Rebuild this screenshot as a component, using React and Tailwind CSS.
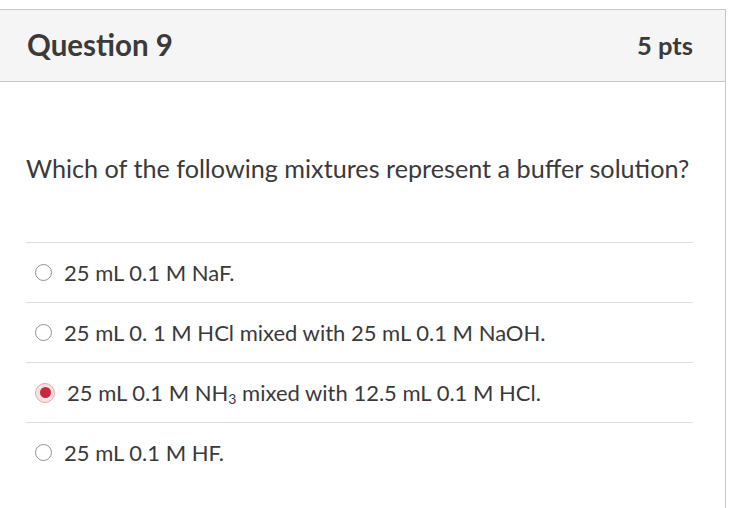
const answers = [
  { id: "a", label: <>25 mL 0.1 M NaF.</> },
  { id: "b", label: <>25 mL 0. 1 M HCl mixed with 25 mL 0.1 M NaOH.</> },
  {
    id: "c",
    label: (
      <>
        25 mL 0.1 M NH<sub className="relative top-[3px] text-[14px]">3</sub> mixed with 12.5 mL 0.1 M HCl.
      </>
    ),
    checked: true,
  },
  { id: "d", label: <>25 mL 0.1 M HF.</> },
];

function Radio({ checked }) {
  if (checked) {
    return (
      <span className="flex h-[20px] w-[20px] shrink-0 items-center justify-center rounded-full border border-[#e9a3aa] bg-[#fbe3e5]">
        <span className="h-[11px] w-[11px] rounded-full bg-[#c8283c]" />
      </span>
    );
  }
  return <span className="block h-[17px] w-[17px] shrink-0 rounded-full border-[1.5px] border-[#8e9397] bg-white" />;
}

export default function App() {
  return (
    <div className="h-[508px] w-[741px] overflow-hidden bg-white pt-[9px] font-['Lato',sans-serif] text-[#3a3a3a]">
      <div className="h-[520px] w-[726px] border-r border-t border-[#c4c8cb]">
        <div className="flex h-[72px] items-center justify-between border-b border-[#c4c8cb] bg-[#f5f5f5] pl-[27px] pr-[32px]">
          <h2 className="text-[29.5px] font-bold">Question 9</h2>
          <span className="text-[25.5px] font-bold">5 pts</span>
        </div>

        <div className="pl-[26px] pr-[32px]">
          <p className="mt-[71px] whitespace-nowrap text-[25.2px] leading-[30px]">
            Which of the following mixtures represent a buffer solution?
          </p>

          <div className="mt-[59px]">
            {answers.map((a) => (
              <div
                key={a.id}
                className="flex h-[60px] items-center gap-[12px] border-t border-[#dedede] pl-[9px] text-[22px]"
              >
                <Radio checked={a.checked} />
                <span className="-mt-[1px] whitespace-nowrap">{a.label}</span>
              </div>
            ))}
          </div>
        </div>
      </div>
    </div>
  );
}
